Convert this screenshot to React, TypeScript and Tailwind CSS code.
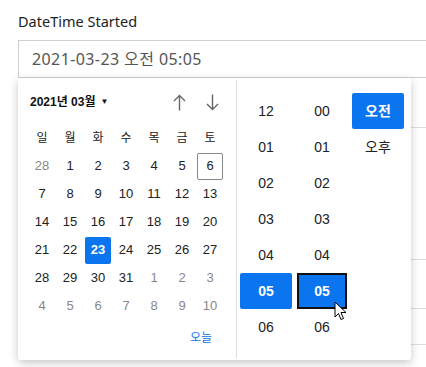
const weekDays = ['일', '월', '화', '수', '목', '금', '토']

// [day, inMonth]
const weeks: [number, boolean][][] = [
  [[28, false], [1, true], [2, true], [3, true], [4, true], [5, true], [6, true]],
  [[7, true], [8, true], [9, true], [10, true], [11, true], [12, true], [13, true]],
  [[14, true], [15, true], [16, true], [17, true], [18, true], [19, true], [20, true]],
  [[21, true], [22, true], [23, true], [24, true], [25, true], [26, true], [27, true]],
  [[28, true], [29, true], [30, true], [31, true], [1, false], [2, false], [3, false]],
  [[4, false], [5, false], [6, false], [7, false], [8, false], [9, false], [10, false]],
]

const hours = ['12', '01', '02', '03', '04', '05', '06']
const minutes = ['00', '01', '02', '03', '04', '05', '06']

function DayCell({ day, inMonth }: { day: number; inMonth: boolean }) {
  const selected = inMonth && day === 23
  const today = inMonth && day === 6
  let cls = 'text-[#222]'
  if (!inMonth) cls = 'text-[#888]'
  if (selected) cls = 'bg-[#0b75f0] text-white font-bold rounded-[2px]'
  if (today) cls = 'border border-[#888] text-[#222] rounded-[2px]'
  return (
    <div className="flex h-[28px] w-[28px] items-center justify-center">
      <div className={`flex h-[27px] w-[26px] items-center justify-center text-[13px] ${cls}`}>{day}</div>
    </div>
  )
}

function Arrow({ down }: { down?: boolean }) {
  return (
    <svg width="13" height="17" viewBox="0 0 13 17" className={down ? 'rotate-180' : ''}>
      <path d="M6.5 1.5 V16.5 M1 7 L6.5 1.5 L12 7" fill="none" stroke="#666" strokeWidth="1.4" />
    </svg>
  )
}

function Cursor() {
  return (
    <svg className="absolute left-[334px] top-[301px]" width="14" height="21" viewBox="0 0 14 21">
      <path
        d="M1 1 L1 16 L4.5 12.5 L7 18.5 L9.5 17.5 L7 11.5 L12 11.5 Z"
        fill="white"
        stroke="black"
        strokeWidth="1"
        strokeLinejoin="round"
      />
    </svg>
  )
}

export default function App() {
  return (
    <div className="relative h-[367px] w-[426px] overflow-hidden bg-white font-['Liberation_Sans','Noto_Sans_CJK_KR',sans-serif]">
      <div className="pl-[18px] pt-[12px]">
        <div className="font-['Noto_Sans','Noto_Sans_CJK_KR',sans-serif] text-[14.5px] leading-[18px] text-[#222]">
          DateTime Started
        </div>
        <div className="mt-[10px] flex h-[38px] w-[460px] items-center border border-[#cfcfcf] pl-[13px] font-['Noto_Sans','Noto_Sans_CJK_KR',sans-serif] text-[16px] tracking-[0.4px] text-[#555]">
          2021-03-23 오전 05:05
        </div>
        <div className="h-[50px] w-[460px] border-b border-[#ddd]" />
        <div className="h-[132px] w-[460px] border-b border-[#ddd]" />
        <div className="h-[49px] w-[460px] border-b border-[#ddd]" />
        <div className="h-[36px] w-[460px] border-b border-[#ddd]" />
      </div>

      <div className="absolute left-[18px] top-[78px] flex h-[282px] w-[393px] rounded-b-[3px] bg-white shadow-[0_3px_10px_rgba(0,0,0,0.22)]">
        <div className="flex w-[218px] flex-col pl-[10px] pt-[14px]">
          <div className="flex h-[20px] items-center">
            <div className="ml-[2px] flex items-center text-[12px] font-bold text-[#111]">
              2021년 03월
              <span className="ml-[5px] text-[8px]">▼</span>
            </div>
            <div className="ml-auto mr-[17px] flex items-center gap-[20px]">
              <Arrow />
              <Arrow down />
            </div>
          </div>
          <div className="mt-[12px] grid w-[196px] grid-cols-7">
            {weekDays.map((d) => (
              <div key={d} className="flex h-[28px] items-center justify-center text-[12px] text-[#222]">
                {d}
              </div>
            ))}
            {weeks.flat().map(([day, inMonth], i) => (
              <DayCell key={i} day={day} inMonth={inMonth} />
            ))}
          </div>
          <div className="flex h-[36px] w-[196px] items-center justify-end pr-[12px] text-[12px] text-[#0b75f0]">
            오늘
          </div>
        </div>

        <div className="my-[2px] w-px bg-[#ddd]" />

        <div className="flex gap-[4px] pl-[3px] pt-[15px]">
          <div className="flex w-[52px] flex-col">
            {hours.map((h) => (
              <div
                key={h}
                className={`flex h-[36px] items-center justify-center text-[14px] ${
                  h === '05' ? 'rounded-[2px] bg-[#0b75f0] font-bold text-white' : 'text-[#222]'
                }`}
              >
                {h}
              </div>
            ))}
          </div>
          <div className="flex w-[52px] flex-col">
            {minutes.map((m) => (
              <div
                key={m}
                className={`flex h-[36px] items-center justify-center text-[14px] ${
                  m === '05' ? 'mx-[1px] border-2 border-[#111] bg-[#0b75f0] font-bold text-white' : 'text-[#222]'
                }`}
              >
                {m}
              </div>
            ))}
          </div>
          <div className="flex w-[52px] flex-col">
            <div className="flex h-[36px] items-center justify-center rounded-[2px] bg-[#0b75f0] text-[14px] font-bold text-white">
              오전
            </div>
            <div className="flex h-[36px] items-center justify-center text-[14px] text-[#222]">오후</div>
          </div>
        </div>
      </div>

      <Cursor />
    </div>
  )
}
